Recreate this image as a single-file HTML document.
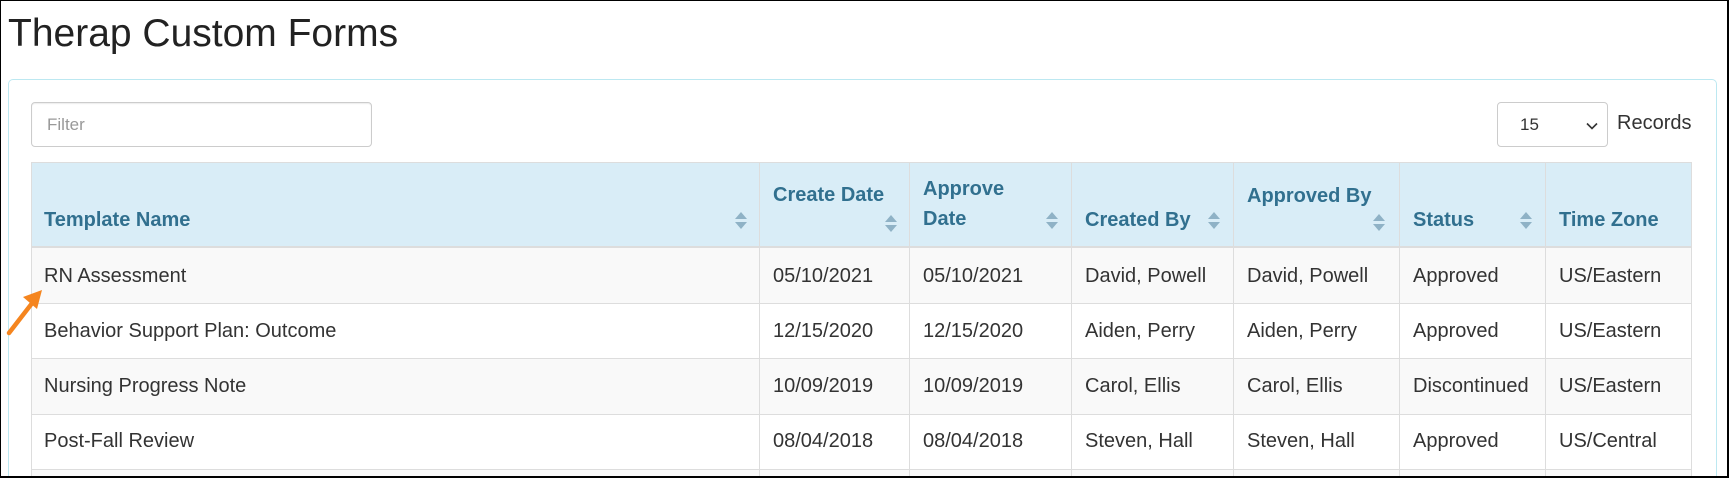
<!DOCTYPE html>
<html><head><meta charset="utf-8"><style>
*{margin:0;padding:0;box-sizing:border-box}
html,body{width:1729px;height:478px;overflow:hidden}
body{background:#fff;font-family:"Liberation Sans",Arial,sans-serif;position:relative;color:#333}
.frame{position:absolute;left:0;top:0;width:1729px;height:478px;border:1px solid #000;border-right-width:2px;border-bottom-width:2px;z-index:10;pointer-events:none}
.a{position:absolute;white-space:nowrap}
h1{position:absolute;left:8px;top:12px;font-size:39px;font-weight:normal;line-height:44px;color:#222}
.panel{position:absolute;left:8px;top:79px;width:1709px;height:399px;border:1px solid #bce8f1;border-bottom:none;border-radius:5px 5px 0 0}
.filter{position:absolute;left:31px;top:102px;width:341px;height:45px;border:1px solid #ccc;border-radius:4px;box-shadow:inset 0 1px 1px rgba(0,0,0,.075);font-size:17px;color:#999;padding:12px 0 0 15px}
.sel{position:absolute;left:1497px;top:102px;width:111px;height:45px;border:1px solid #ccc;border-radius:4px;font-size:17px;color:#333;padding:12px 0 0 22px}
.hd{position:absolute;top:162px;height:85px;background:#d9edf7;border:1px solid #ddd;border-right:none}
.row{position:absolute;left:31px;width:1661px;border-top:1px solid #ddd}
.vl{position:absolute;top:162px;height:316px;width:1px;background:#ddd}
.h{position:absolute;font-size:20px;font-weight:bold;color:#31708f;line-height:30px;white-space:nowrap}
.c{position:absolute;font-size:20px;line-height:20px;color:#333;white-space:nowrap}
.s{position:absolute;width:12px;height:18px}
.clip{position:absolute;left:0;top:0;width:1729px;height:478px;overflow:hidden}
</style></head><body>
<div class="clip">
<h1>Therap Custom Forms</h1>
<div class="panel"></div>
<div class="filter">Filter</div>
<div class="sel">15<svg style="position:absolute;left:88px;top:19px" width="12" height="8" viewBox="0 0 12 8"><path d="M1 1.5 6 6.5 11 1.5" fill="none" stroke="#333" stroke-width="1.6"/></svg></div>
<div class="a" style="left:1617px;top:111px;font-size:20px;line-height:24px;color:#333">Records</div>

<div class="hd" style="left:31px;width:1661px"></div>
<div class="row" style="top:247px;height:56px;background:#f9f9f9"></div>
<div class="row" style="top:303px;height:55px;background:#fff"></div>
<div class="row" style="top:358px;height:56px;background:#f9f9f9"></div>
<div class="row" style="top:414px;height:55px;background:#fff"></div>
<div class="row" style="top:469px;height:9px;background:#f9f9f9"></div>
<div class="vl" style="left:31px"></div>
<div class="vl" style="left:759px"></div>
<div class="vl" style="left:909px"></div>
<div class="vl" style="left:1071px"></div>
<div class="vl" style="left:1233px"></div>
<div class="vl" style="left:1399px"></div>
<div class="vl" style="left:1545px"></div>
<div class="vl" style="left:1691px"></div>

<div class="h" style="left:44px;top:205px">Template Name</div>
<div class="h" style="left:773px;top:180px">Create Date</div>
<div class="h" style="left:923px;top:174px">Approve</div>
<div class="h" style="left:923px;top:204px">Date</div>
<div class="h" style="left:1085px;top:205px">Created By</div>
<div class="h" style="left:1247px;top:181px">Approved By</div>
<div class="h" style="left:1413px;top:205px">Status</div>
<div class="h" style="left:1559px;top:205px">Time Zone</div>

<svg class="s" style="left:735px;top:212px" viewBox="0 0 12 18"><path d="M6 0 12 7H0Z M0 10H12L6 17Z" fill="#8fb2c6"/></svg>
<svg class="s" style="left:885px;top:215px" viewBox="0 0 12 18"><path d="M6 0 12 7H0Z M0 10H12L6 17Z" fill="#8fb2c6"/></svg>
<svg class="s" style="left:1046px;top:212px" viewBox="0 0 12 18"><path d="M6 0 12 7H0Z M0 10H12L6 17Z" fill="#8fb2c6"/></svg>
<svg class="s" style="left:1208px;top:212px" viewBox="0 0 12 18"><path d="M6 0 12 7H0Z M0 10H12L6 17Z" fill="#8fb2c6"/></svg>
<svg class="s" style="left:1373px;top:214px" viewBox="0 0 12 18"><path d="M6 0 12 7H0Z M0 10H12L6 17Z" fill="#8fb2c6"/></svg>
<svg class="s" style="left:1520px;top:212px" viewBox="0 0 12 18"><path d="M6 0 12 7H0Z M0 10H12L6 17Z" fill="#8fb2c6"/></svg>

<div class="c" style="left:44px;top:266px">RN Assessment</div>
<div class="c" style="left:773px;top:266px">05/10/2021</div>
<div class="c" style="left:923px;top:266px">05/10/2021</div>
<div class="c" style="left:1085px;top:266px">David, Powell</div>
<div class="c" style="left:1247px;top:266px">David, Powell</div>
<div class="c" style="left:1413px;top:266px">Approved</div>
<div class="c" style="left:1559px;top:266px">US/Eastern</div>

<div class="c" style="left:44px;top:321px">Behavior Support Plan: Outcome</div>
<div class="c" style="left:773px;top:321px">12/15/2020</div>
<div class="c" style="left:923px;top:321px">12/15/2020</div>
<div class="c" style="left:1085px;top:321px">Aiden, Perry</div>
<div class="c" style="left:1247px;top:321px">Aiden, Perry</div>
<div class="c" style="left:1413px;top:321px">Approved</div>
<div class="c" style="left:1559px;top:321px">US/Eastern</div>

<div class="c" style="left:44px;top:376px">Nursing Progress Note</div>
<div class="c" style="left:773px;top:376px">10/09/2019</div>
<div class="c" style="left:923px;top:376px">10/09/2019</div>
<div class="c" style="left:1085px;top:376px">Carol, Ellis</div>
<div class="c" style="left:1247px;top:376px">Carol, Ellis</div>
<div class="c" style="left:1413px;top:376px">Discontinued</div>
<div class="c" style="left:1559px;top:376px">US/Eastern</div>

<div class="c" style="left:44px;top:431px">Post-Fall Review</div>
<div class="c" style="left:773px;top:431px">08/04/2018</div>
<div class="c" style="left:923px;top:431px">08/04/2018</div>
<div class="c" style="left:1085px;top:431px">Steven, Hall</div>
<div class="c" style="left:1247px;top:431px">Steven, Hall</div>
<div class="c" style="left:1413px;top:431px">Approved</div>
<div class="c" style="left:1559px;top:431px">US/Central</div>

<svg style="position:absolute;left:0;top:280px" width="60" height="60" viewBox="0 0 60 60">
<path d="M9 53 33 22" stroke="#f5851f" stroke-width="4.5" stroke-linecap="round"/>
<path d="M42 10 23 17 37 29Z" fill="#f5851f"/>
</svg>
<div class="frame"></div>
</div>
</body></html>
